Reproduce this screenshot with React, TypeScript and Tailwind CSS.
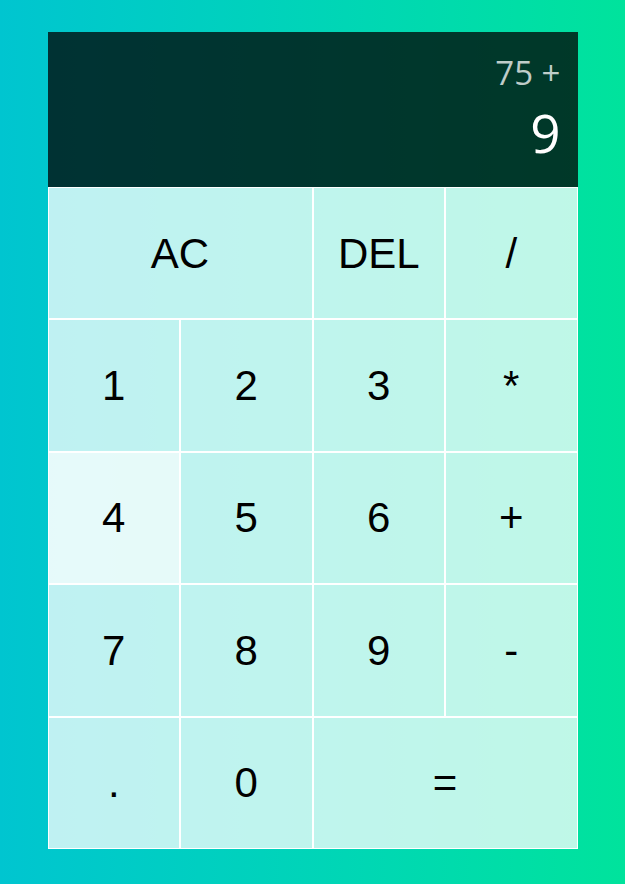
import { useState } from "react"

const keys: { label: string; wide?: boolean }[] = [
  { label: "AC", wide: true },
  { label: "DEL" },
  { label: "/" },
  { label: "1" },
  { label: "2" },
  { label: "3" },
  { label: "*" },
  { label: "4" },
  { label: "5" },
  { label: "6" },
  { label: "+" },
  { label: "7" },
  { label: "8" },
  { label: "9" },
  { label: "-" },
  { label: "." },
  { label: "0" },
  { label: "=", wide: true },
]

export default function App() {
  const [hovered] = useState("4")

  return (
    <div className="min-h-screen bg-gradient-to-r from-[#00c5d0] to-[#00e39c] pt-[32px]">
      <div className="mx-auto grid w-[530px] grid-cols-[repeat(4,132.5px)] grid-rows-[155px_repeat(5,132.4px)]">
        <div className="col-span-4 flex flex-col items-end bg-black/75 pr-[17px] pt-[18px] font-['Open_Sans',sans-serif]">
          <div className="text-[33px] leading-[45px] text-white/75">75 +</div>
          <div className="mt-[2px] text-[53px] leading-[72px] text-white">9</div>
        </div>
        {keys.map((k) => (
          <button
            key={k.label}
            className={`flex items-center justify-center border border-white font-['Liberation_Sans',Arial,sans-serif] text-[42px] text-black outline-none ${
              k.wide ? "col-span-2" : ""
            } ${hovered === k.label ? "bg-white/90" : "bg-white/75 hover:bg-white/90"}`}
          >
            {k.label}
          </button>
        ))}
      </div>
    </div>
  )
}
